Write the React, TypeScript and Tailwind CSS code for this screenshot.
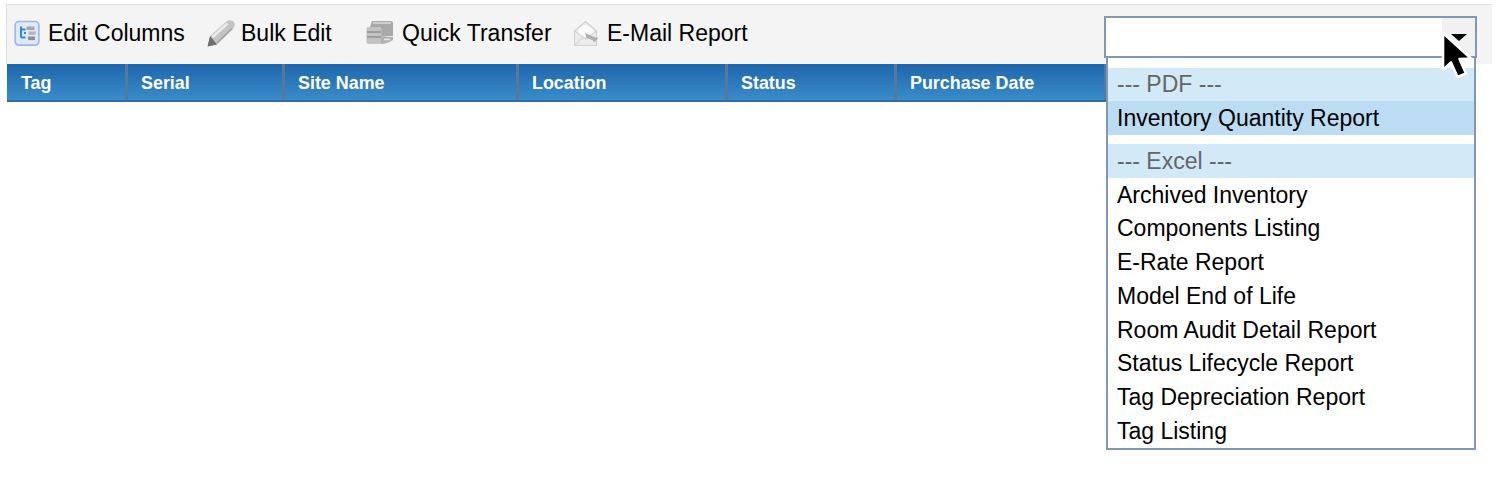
import React from "react";

const ColumnsIcon = () => (
  <svg width="26" height="26" viewBox="0 0 26 26" className="blur-[0.4px]">
    <rect x="1.2" y="1.5" width="23.6" height="23.6" rx="3.5" fill="#dfe9f9" stroke="#9fb7e8" strokeWidth="1.7" />
    <path d="M7 6.5v11M7 9.5h4.5M7 17.5h4.5M10 13h2" fill="none" stroke="#2b8bd6" strokeWidth="2" />
    <rect x="12.5" y="6.5" width="8" height="3.5" fill="#a8a8a8" />
    <rect x="14.5" y="11.5" width="7" height="3.4" fill="#b5b5b5" />
    <rect x="14" y="16.5" width="7" height="3.6" fill="#8e8e8e" />
  </svg>
);

const PencilIcon = () => (
  <svg width="30" height="30" viewBox="0 0 30 30" className="blur-[0.7px]">
    <path d="M1.5 28.5 L4 18 L20.5 3.5 Q25 1 28 4 Q30 7.5 27 11 L11 26.5 Z" fill="#c4c4c4" />
    <path d="M6.5 19 L21.5 5.5" stroke="#ebebeb" strokeWidth="2.6" />
    <path d="M11 25 L26 10.5" stroke="#a4a4a4" strokeWidth="1.6" />
    <path d="M1.5 28.5 L4 18 L11 26.5 Z" fill="#6f6f6f" />
  </svg>
);

const TransferIcon = () => (
  <svg width="30" height="28" viewBox="0 0 30 28" className="blur-[0.7px]">
    <path d="M7 2 H26 Q28 2 28 4 V17 L14 18 V8 H5 Z" fill="#a9a9a9" />
    <path d="M8 4 H26" stroke="#cfcfcf" strokeWidth="2" />
    <rect x="1.5" y="8" width="15" height="17" rx="2" fill="#c2c2c2" />
    <path d="M2 13h14M2 18h14" stroke="#919191" strokeWidth="1.6" />
    <path d="M16 18 H28 V21 Q22 25 16 25 Z" fill="#b0b0b0" />
    <path d="M19 20.5h6" stroke="#e4e4e4" strokeWidth="1.6" />
  </svg>
);

const MailIcon = () => (
  <svg width="28" height="28" viewBox="0 0 28 28" className="blur-[0.6px]">
    <path d="M1.5 12 L12.5 2.5 L23.5 12 V26.5 H1.5 Z" fill="#ececec" stroke="#d2d2d2" strokeWidth="1.2" />
    <path d="M5.5 10 L12.5 5.5 L19.5 10 V15 L12.5 19 L5.5 15 Z" fill="#fbfbfb" />
    <path d="M1.5 12 L12.5 20 L23.5 12" fill="none" stroke="#d4d4d4" strokeWidth="1.2" />
    <path d="M1.5 26.5 L10.5 18" stroke="#d8d8d8" strokeWidth="1.2" />
    <path d="M12 14 L20 17.5 L25.5 19 L21 23.5 L19.5 21 L13.5 19 Z" fill="#b0b0b0" />
  </svg>
);

const Cursor = () => (
  <svg width="38" height="50" viewBox="0 0 38 50" className="absolute left-[1439px] top-[31px]">
    <path d="M4 2 V39 L12 31.5 L18.5 46 L27 42.5 L20.5 28 L32 27.5 Z" fill="#000" stroke="#fff" strokeWidth="2.6" strokeLinejoin="round" />
  </svg>
);

const tools = [
  { label: "Edit Columns", icon: <ColumnsIcon />, cls: "w-[192px]", gap: "gap-[8px]" },
  { label: "Bulk Edit", icon: <PencilIcon />, cls: "w-[159px]", gap: "gap-[5px]" },
  { label: "Quick Transfer", icon: <TransferIcon />, cls: "w-[208px]", gap: "gap-[7px]" },
  { label: "E-Mail Report", icon: <MailIcon />, cls: "w-[190px]", gap: "gap-[6px]" },
];

const columns = [
  { label: "Tag", cls: "w-[121px]" },
  { label: "Serial", cls: "w-[157px]" },
  { label: "Site Name", cls: "w-[234px]" },
  { label: "Location", cls: "w-[209px]" },
  { label: "Status", cls: "w-[169px]" },
  { label: "Purchase Date", cls: "flex-1 border-r-0" },
];

const excel = [
  "Archived Inventory",
  "Components Listing",
  "E-Rate Report",
  "Model End of Life",
  "Room Audit Detail Report",
  "Status Lifecycle Report",
  "Tag Depreciation Report",
  "Tag Listing",
];

export default function App() {
  return (
    <div className="relative h-[478px] w-[1500px] overflow-hidden bg-white pl-[6px] pt-[4px] font-['Liberation_Sans',Arial,sans-serif] text-black">
      <div className="flex h-[60px] w-[1486px] items-center border-l border-t border-[#dfe3e8] bg-[#f4f4f4] pb-[3px] pl-[7px]">
        {tools.map((t) => (
          <div key={t.label} className={`flex items-center ${t.cls} ${t.gap}`}>
            {t.icon}
            <span className="text-[23px] leading-none">{t.label}</span>
          </div>
        ))}
        <div className="ml-[341px] mt-[8px] flex h-[42px] w-[373px] justify-end border-2 border-[#7f98b8] bg-white">
          <div className="flex w-[33px] items-center justify-center bg-[#f1f1f1]">
            <div className="h-0 w-0 border-x-[8px] border-t-[7px] border-x-transparent border-t-black" />
          </div>
        </div>
      </div>

      <div className="ml-px flex h-[38px] w-[1100px] border-b-2 border-[#2f6da3] bg-gradient-to-b from-[#1e66ab] to-[#3a8cc9]">
        {columns.map((c, i) => (
          <div
            key={c.label}
            className={`flex items-center border-r-[3px] border-[#56789a] pt-[2px] text-[17.9px] font-bold text-white ${i === 0 ? "pl-[14px]" : "pl-[13px]"} ${c.cls}`}
          >
            {c.label}
          </div>
        ))}
      </div>

      <div className="absolute left-[1106px] top-[58px] w-[370px] border-2 border-t-0 border-[#7f98b8] bg-white pt-[10px] text-[23px] leading-[34px]">
        <div className="h-[33px] bg-[#d2e9f7] pl-[9px] leading-[33px] text-[#666]">--- PDF ---</div>
        <div className="h-[34px] bg-[#bcdcf3] pl-[9px]">Inventory Quantity Report</div>
        <div className="mt-[9px] h-[34px] bg-[#d2e9f7] pl-[9px] text-[#666]">--- Excel ---</div>
        {excel.map((e) => (
          <div key={e} className="h-[33.75px] pl-[9px] pt-[0.5px] leading-[33.75px]">
            {e}
          </div>
        ))}
      </div>

      <Cursor />
    </div>
  );
}
